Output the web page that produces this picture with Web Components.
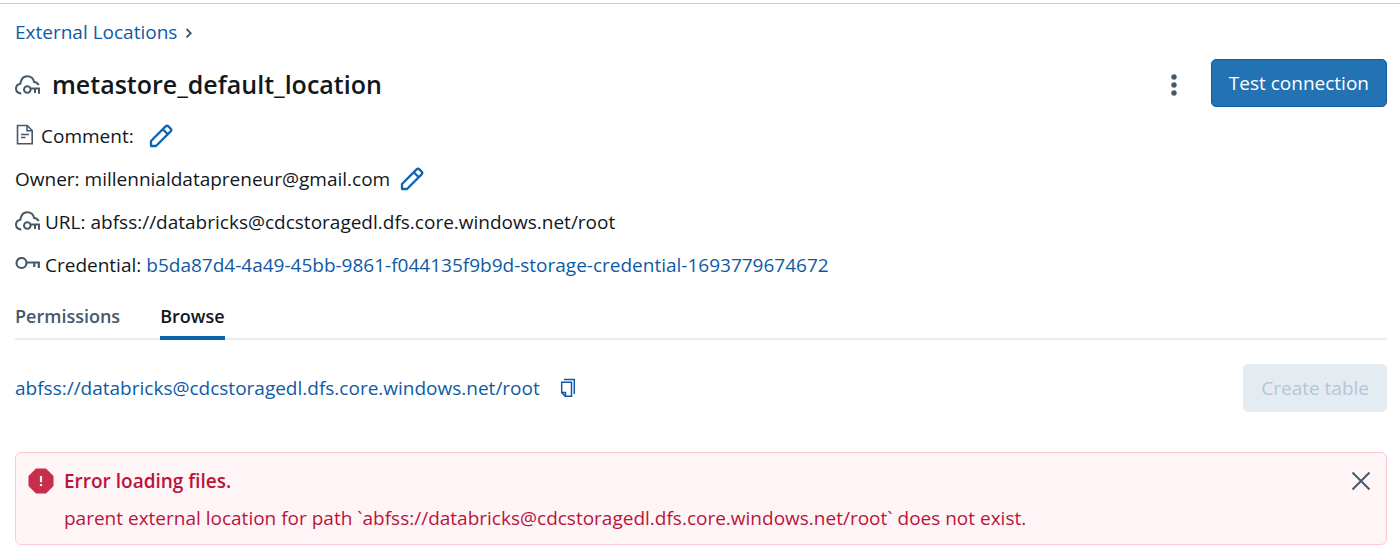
<!DOCTYPE html>
<html lang="en">
<head>
<meta charset="utf-8">
<title>metastore_default_location</title>
<style>
  body {
    margin: 0;
    background: #fff;
    color: #11171c;
    font: 400 19px/28px "Open Sans", "Noto Sans", sans-serif;
    --link: #0e5aa7;
    --primary: #2272b4;
    --muted: #44596b;
    --danger: #b9143c;
  }
</style>
</head>
<body>
<location-page></location-page>

<script>
const ICONS = {
  cloudkey: ['0 0 25 20', `<g fill="none" stroke="currentColor" stroke-width="2"><path d="M6.300 18.600C3.200 18.300 1 16.300 1 13.600c0-2.500 1.700-4.400 4.400-4.900C6 4.200 8.700 1.200 12.300 1.200c3.600 0 6.100 2.300 6.800 5.800 2.100.2 3.700 1.300 4.600 3.100"/><circle cx="12.300" cy="14.500" r="3.300"/><path d="M15.600 13.600h8.400v5.200M20 13.600v4.500"/></g>`],
  key: ['0 0 25 14', `<g fill="none" stroke="currentColor" stroke-width="2.200"><circle cx="6.500" cy="6" r="5"/><path d="M11.500 5.500h12.300v5.600M19.300 5.500v4.400"/></g>`],
  doc: ['-1 0 21 22', `<g fill="none" stroke="currentColor" stroke-width="1.600"><path d="M1.500 1.500h9.700l5 5v13.300h-14.700zM11 1.500v5.200h5.200M5 10.500h8M5 13.500h4.500"/></g>`],
  pencil: ['0 0 24 24', `<g fill="none" stroke="currentColor" stroke-width="2.300" stroke-linejoin="round"><path d="M2 22v-5L16.600 2.400a2 2 0 0 1 2.800 0l2.200 2.200a2 2 0 0 1 0 2.800L7 22zM13.800 5.200l5 5"/></g>`],
  chevron: ['0 0 8 12', `<path d="M1.500 2L5.700 6.200l-4.200 4.200" fill="none" stroke="currentColor" stroke-width="1.900"/>`],
  dots: ['0 0 6 22', `<g fill="currentColor"><circle cx="3" cy="3" r="2.700"/><circle cx="3" cy="11" r="2.700"/><circle cx="3" cy="19" r="2.700"/></g>`],
  copy: ['0 0 16 20', `<g fill="none" stroke="currentColor" stroke-width="1.500"><path d="M4 1.500h10.300v14.500M1.700 4.200h9.800v14H5.200l-3.500-3.500zM2 14.500h3.500v3.500"/></g>`],
  close: ['0 0 20 20', `<path d="M1.500 1.500l17 17M18.500 1.500l-17 17" fill="none" stroke="currentColor" stroke-width="2"/>`],
  error: ['0 0 26 26', `<path d="M8 .5h10L25.500 8v10L18 25.500H8L.5 18V8z" fill="#c82d4c"/><path d="M13 8v6.200M13 16v2" stroke="#fff" stroke-width="2.200"/>`]
};

function define(name, render) {
  customElements.define(name, class extends HTMLElement {
    connectedCallback() {
      if (this.shadowRoot) return;
      const t = document.createElement('template');
      t.innerHTML = render(this);
      this.attachShadow({ mode: 'open' }).append(t.content.cloneNode(true));
    }
  });
}

define('ui-icon', el => {
  const [box, body] = ICONS[el.getAttribute('name')];
  const [, , w, h] = box.split(' ');
  return `<style>:host{display:inline-flex;flex:none}svg{display:block}</style>
    <svg width="${w}" height="${h}" viewBox="${box}" aria-hidden="true">${body}</svg>`;
});

define('icon-button', el => `
  <style>
    :host { display: inline-flex; flex: none; color: var(--icon-color, var(--link)); }
    button { display: flex; border: 0; padding: 0; background: none; color: inherit; cursor: pointer; }
  </style>
  <button type="button" aria-label="${el.getAttribute('label')}"><ui-icon name="${el.getAttribute('icon')}"></ui-icon></button>`);

define('ui-button', el => `
  <style>
    :host { display: inline-flex; flex: none; }
    button { height: 48px; padding: 0 17px; border: 1px solid #0e5aa7; border-radius: 5px;
      background: var(--primary); color: #fff; font: inherit; white-space: nowrap; cursor: pointer; }
    button:disabled { background: #e4ebf1; border-color: #e4ebf1; color: #b4c6d8; cursor: default; }
  </style>
  <button type="button" ${el.hasAttribute('disabled') ? 'disabled' : ''}><slot></slot></button>`);

define('ui-link', el => `
  <style>:host{display:inline}a{color:var(--link);text-decoration:none}</style>
  <a href="${el.getAttribute('to') || '#'}"><slot></slot></a>`);

define('bread-crumb', () => `
  <style>
    nav { display: flex; align-items: center; gap: 8px; }
    :host { display: block; }
    ui-icon { color: var(--muted); padding-top: 2px; }
  </style>
  <nav aria-label="Breadcrumb"><slot></slot><ui-icon name="chevron"></ui-icon></nav>`);

define('page-header', () => `
  <style>
    :host { display: flex; align-items: center; gap: 12px; }
    ui-icon { color: var(--muted); padding-top: 4px; }
    h1 { flex: 1; margin: 0; padding-top: 2px; font-size: 25px; line-height: 36px; font-weight: 600; }
    .actions { display: flex; align-items: center; gap: 34px; --icon-color: var(--muted); }
    ::slotted(icon-button) { padding-top: 4px; }
  </style>
  <ui-icon name="cloudkey"></ui-icon>
  <h1><slot></slot></h1>
  <div class="actions"><slot name="actions"></slot></div>`);

define('meta-row', el => `
  <style>
    :host { display: flex; align-items: center; }
    .lead { color: var(--muted); margin-right: 5px; padding-bottom: 2px; }
    .value { margin-left: 5px; }
    icon-button { margin-left: 10px; color: #0e64b0; }
  </style>
  ${el.hasAttribute('icon') ? `<ui-icon class="lead" name="${el.getAttribute('icon')}"></ui-icon>` : ''}
  <span>${el.getAttribute('label')}:</span>
  <span class="value"><slot></slot></span>
  ${el.hasAttribute('editable') ? `<icon-button icon="pencil" label="Edit ${el.getAttribute('label')}"></icon-button>` : ''}`);

define('tab-bar', () => `
  <style>
    :host { display: flex; gap: 40px; border-bottom: 2px solid #e8ecf0; }
  </style><slot></slot>`);

define('tab-item', el => `
  <style>
    :host { display: block; margin-bottom: -2px; }
    button { display: block; padding: 0 0 6px; border: 0; border-bottom: 4px solid transparent; background: none;
      font: inherit; font-size: 18px; font-weight: 600; color: var(--muted); cursor: pointer; }
    button[aria-selected=true] { color: #11171c; border-color: #0e64b0; }
  </style>
  <button type="button" role="tab" aria-selected="${el.hasAttribute('selected')}"><slot></slot></button>`);

define('error-alert', () => `
  <style>
    :host { display: flex; align-items: flex-start; gap: 10px; padding: 14px 15px 12px 12px;
      border: 1px solid #fbc9d3; border-radius: 6px; background: #fff5f7; color: var(--danger); }
    ui-icon { padding-top: 1px; }
    .text { flex: 1; display: grid; gap: 9px; }
    strong { font-weight: 600; }
    icon-button { padding-top: 4px; --icon-color: var(--muted); }
  </style>
  <ui-icon name="error"></ui-icon>
  <div class="text" role="alert"><strong><slot name="title"></slot></strong><span><slot></slot></span></div>
  <icon-button icon="close" label="Close"></icon-button>`);

define('location-page', () => `
  <style>
    :host { display: block; padding-top: 3px; }
    main { border-top: 1px solid #c3cddb; padding: 14px 13px 6px 15px; }
    page-header { margin-top: 13px; }
    .meta { display: grid; gap: 15px; margin-top: 15px; }
    tab-bar { margin-top: 23px; }
    .path { display: flex; align-items: center; gap: 20px; margin-top: 24px; }
    .path ui-button { margin-left: auto; }
    error-alert { margin-top: 40px; }
  </style>
  <main>
    <bread-crumb><ui-link>External Locations</ui-link></bread-crumb>
    <page-header>metastore_default_location
      <icon-button slot="actions" icon="dots" label="More actions"></icon-button>
      <ui-button slot="actions">Test connection</ui-button>
    </page-header>
    <section class="meta">
      <meta-row icon="doc" label="Comment" editable></meta-row>
      <meta-row label="Owner" editable>millennialdatapreneur@gmail.com</meta-row>
      <meta-row icon="cloudkey" label="URL">abfss://databricks@cdcstoragedl.dfs.core.windows.net/root</meta-row>
      <meta-row icon="key" label="Credential"><ui-link>b5da87d4-4a49-45bb-9861-f044135f9b9d-storage-credential-1693779674672</ui-link></meta-row>
    </section>
    <tab-bar role="tablist"><tab-item>Permissions</tab-item><tab-item selected>Browse</tab-item></tab-bar>
    <div class="path">
      <ui-link>abfss://databricks@cdcstoragedl.dfs.core.windows.net/root</ui-link>
      <icon-button icon="copy" label="Copy path"></icon-button>
      <ui-button disabled>Create table</ui-button>
    </div>
    <error-alert><span slot="title">Error loading files.</span>parent external location for path \`abfss://databricks@cdcstoragedl.dfs.core.windows.net/root\` does not exist.</error-alert>
  </main>`);
</script>
</body>
</html>
